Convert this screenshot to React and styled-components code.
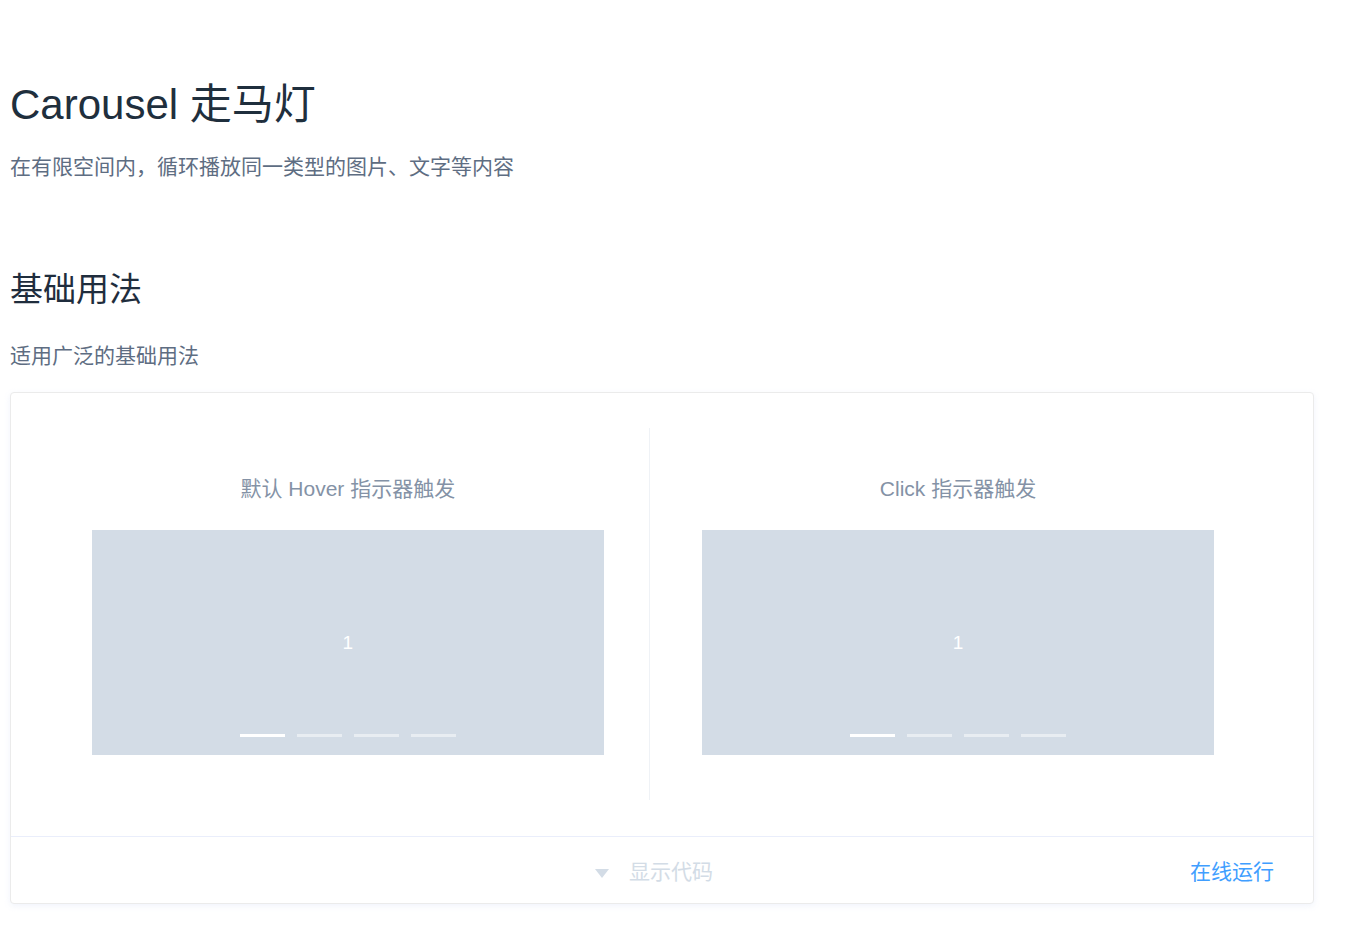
import React from "react";
import styled, { createGlobalStyle } from "styled-components";

const Global = createGlobalStyle`
  html, body { margin: 0; padding: 0; background: #fff; }
  body {
    font-family: "Liberation Sans", Arial, "Noto Sans CJK SC", sans-serif;
    -webkit-font-smoothing: antialiased;
  }
  * { box-sizing: border-box; }
`;

const Page = styled.div`
  padding: 73px 36px 40px 10px;
`;

const Title = styled.h2`
  margin: 0;
  font-size: 42px;
  font-weight: 400;
  line-height: 63px;
  color: #1f2f3d;
`;

const Lead = styled.p`
  margin: ${(p) => p.$top}px 0 0;
  font-size: 21px;
  line-height: 32px;
  color: #5e6d82;
`;

const Section = styled.h3`
  margin: 82px 0 0;
  font-size: 33px;
  font-weight: 400;
  line-height: 50px;
  color: #1f2d3d;
`;

const Card = styled.div`
  margin-top: 20px;
  border: 1px solid #ebebeb;
  border-radius: 4px;
  box-shadow: 0 2px 6px 0 rgba(232, 237, 250, 0.6);
  background: #fff;
`;

const Demo = styled.div`
  padding: 35px 36px 36px;
  display: flex;
  gap: 7px;
`;

const Block = styled.div`
  width: 49%;
  padding: 45px 0;
  text-align: center;
  border-right: ${(p) => (p.$last ? "none" : "1px solid #eff2f6")};
  display: flex;
  flex-direction: column;
  align-items: center;
`;

const Demonstration = styled.span`
  display: block;
  font-size: 21px;
  line-height: 31px;
  color: #8492a6;
  margin-bottom: 26px;
`;

const Carousel = styled.div`
  position: relative;
  width: 85%;
  height: 225px;
  background: #d3dce6;
  display: flex;
  align-items: center;
  justify-content: center;
  overflow: hidden;
`;

const ItemLabel = styled.span`
  color: #fff;
  font-size: 19px;
  line-height: 1;
`;

const Indicators = styled.ul`
  position: absolute;
  left: 50%;
  bottom: 0;
  transform: translateX(-50%);
  margin: 0;
  padding: 0;
  list-style: none;
  display: flex;
`;

const Indicator = styled.li`
  padding: 18px 6px;
  cursor: pointer;
`;

const Bar = styled.span`
  display: block;
  width: 45px;
  height: 3px;
  background: #fff;
  opacity: ${(p) => (p.$active ? 1 : 0.48)};
`;

const Footer = styled.div`
  border-top: 1px solid #eaeefb;
  height: 67px;
  display: grid;
  grid-template-columns: 1fr auto 1fr;
  align-items: center;
`;

const Toggle = styled.div`
  grid-column: 2;
  display: flex;
  align-items: center;
  gap: 20px;
  margin-right: 16px;
  margin-top: 4px;
  color: #d3dce6;
  font-size: 21px;
  line-height: 32px;
`;

const Triangle = styled.span`
  width: 0;
  height: 0;
  border-left: 7px solid transparent;
  border-right: 7px solid transparent;
  border-top: 9px solid #d3dce6;
  margin-top: 2px;
`;

const RunLink = styled.a`
  grid-column: 3;
  justify-self: end;
  margin-right: 39px;
  margin-top: 4px;
  color: #409eff;
  font-size: 21px;
  line-height: 32px;
  text-decoration: none;
`;

function CarouselDemo({ label, last }) {
  return (
    <Block $last={last}>
      <Demonstration>{label}</Demonstration>
      <Carousel>
        <ItemLabel>1</ItemLabel>
        <Indicators>
          {[0, 1, 2, 3].map((i) => (
            <Indicator key={i}>
              <Bar $active={i === 0} />
            </Indicator>
          ))}
        </Indicators>
      </Carousel>
    </Block>
  );
}

export default function App() {
  return (
    <>
      <Global />
      <Page>
        <Title>Carousel 走马灯</Title>
        <Lead $top={15}>在有限空间内，循环播放同一类型的图片、文字等内容</Lead>
        <Section>基础用法</Section>
        <Lead $top={25}>适用广泛的基础用法</Lead>
        <Card>
          <Demo>
            <CarouselDemo label="默认 Hover 指示器触发" />
            <CarouselDemo label="Click 指示器触发" last />
          </Demo>
          <Footer>
            <Toggle>
              <Triangle />
              <span>显示代码</span>
            </Toggle>
            <RunLink href="#">在线运行</RunLink>
          </Footer>
        </Card>
      </Page>
    </>
  );
}
